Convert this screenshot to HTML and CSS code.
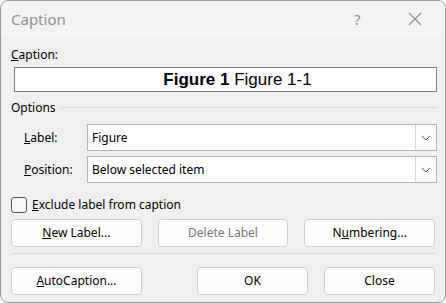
FILE: index.html
```html
<!doctype html>
<html lang="en">
<head>
    <meta charset="UTF-8">
    <title>Caption</title>
    <link rel="stylesheet" href="styles.css">
</head>
<body>

    <div class='dialog'>

        <div class='titlebar'>
            <span class='title'>Caption</span>
            <span class='help'>?</span>
            <span class='close'>
                <svg width='14' height='14' viewBox='0 0 14 14'>
                    <path d='M1 1 L13 13 M13 1 L1 13' stroke='#8c8c8c' stroke-width='1.1' fill='none'/>
                </svg>
            </span>
        </div>

        <div class='content'>

            <div class='fieldLabel'><u>C</u>aption:</div>
            <div class='captionBox'><b>Figure 1</b> Figure 1-1</div>

            <div class='groupHead'>
                <span>Options</span>
                <span class='rule'></span>
            </div>

            <div class='optRow'>
                <div class='optLabel'><u>L</u>abel:</div>
                <div class='select'>
                    <span class='selectText'>Figure</span>
                    <span class='drop'>
                        <svg width='10' height='6' viewBox='0 0 10 6'>
                            <path d='M1 1 L5 5 L9 1' stroke='#555' stroke-width='1' fill='none'/>
                        </svg>
                    </span>
                </div>
            </div>

            <div class='optRow second'>
                <div class='optLabel'><u>P</u>osition:</div>
                <div class='select'>
                    <span class='selectText'>Below selected item</span>
                    <span class='drop'>
                        <svg width='10' height='6' viewBox='0 0 10 6'>
                            <path d='M1 1 L5 5 L9 1' stroke='#555' stroke-width='1' fill='none'/>
                        </svg>
                    </span>
                </div>
            </div>

            <div class='checkRow'>
                <span class='checkbox'></span>
                <span><u>E</u>xclude label from caption</span>
            </div>

            <div class='btnRow'>
                <div class='button wide'><u>N</u>ew Label...</div>
                <div class='button wide disabled'>Delete Label</div>
                <div class='button wide'>N<u>u</u>mbering...</div>
            </div>

            <div class='separator'></div>

            <div class='btnRow bottomRow'>
                <div class='button wide'><u>A</u>utoCaption...</div>
                <div class='spacer'></div>
                <div class='button narrow'>OK</div>
                <div class='button narrow'>Close</div>
            </div>

        </div>

    </div>

</body>
</html>
```

FILE: styles.css
```css
body
{
    margin:           0;
    background-color: #ffffff;
    font-family:      "Noto Sans", sans-serif;
    font-size:        12px;
    color:            #000;
}

.dialog
{
    width:            444px;
    height:           301px;
    background-color: #f0f0f0;
    border:           1px solid #9a9a9a;
    border-radius:    8px;
    overflow:         hidden;
}

.titlebar
{
    height:           36px;
    background-color: #f3f3f3;
    display:          flex;
    align-items:      center;
    padding-left:     10px;
}

.title
{
    font-size:        15px;
    color:            #8f8f8f;
    flex:             1;
}

.help
{
    font-size:        15px;
    color:            #8f8f8f;
    width:            54px;
}

.close
{
    width:            37px;
    display:          flex;
    align-items:      center;
}

.content
{
    padding:          0 8px 0 9px;
}

.fieldLabel
{
    margin-top:       10px;
    margin-left:      1px;
    line-height:      16px;
}

.captionBox
{
    margin-top:       4px;
    margin-left:      4px;
    height:           23px;
    border:           1px solid #7f7f7f;
    background-color: #fff;
    font-family:      "Liberation Sans", sans-serif;
    font-size:        17px;
    line-height:      23px;
    text-align:       center;
    padding-left:     24px;
}

.groupHead
{
    margin-top:       8px;
    margin-left:      1px;
    display:          flex;
    align-items:      center;
    line-height:      16px;
}

.rule
{
    flex:             1;
    height:           1px;
    margin-left:      5px;
    margin-top:       -1px;
    background-color: #dcdcdc;
}

.optRow
{
    display:          flex;
    align-items:      center;
    margin-top:       8px;
    padding-left:     14px;
}

.optRow.second
{
    margin-top:       5px;
}

.optLabel
{
    width:            63px;
}

.select
{
    flex:             1;
    height:           25px;
    border:           1px solid #b4b4b4;
    background-color: #fff;
    display:          flex;
    align-items:      stretch;
}

.selectText
{
    flex:             1;
    padding-left:     4px;
    line-height:      25px;
}

.drop
{
    width:            20px;
    border-left:      1px solid #d6d6d6;
    background-color: #fcfcfc;
    display:          flex;
    align-items:      center;
    justify-content:  center;
}

.checkRow
{
    display:          flex;
    align-items:      center;
    margin-top:       14px;
    margin-left:      1px;
    line-height:      16px;
}

.checkbox
{
    width:            14px;
    height:           14px;
    border:           1px solid #555;
    border-radius:    3px;
    background-color: #f7f7f7;
    margin-right:     5px;
}

.btnRow
{
    display:          flex;
    gap:              16px;
    margin-top:       6px;
    margin-left:      1px;
    margin-right:     2px;
}

.bottomRow
{
    margin-top:       13px;
}

.spacer
{
    flex:             1;
    margin-left:      -16px;
}

.button
{
    height:           26px;
    line-height:      26px;
    text-align:       center;
    background-color: #fdfdfd;
    border:           1px solid #d0d0d0;
    border-radius:    4px;
}

.wide
{
    width:            129px;
}

.narrow
{
    width:            109px;
}

.disabled
{
    color:            #787878;
}

.separator
{
    height:           1px;
    margin-top:       6px;
    margin-left:      1px;
    margin-right:     2px;
    background-color: #dcdcdc;
}
```
